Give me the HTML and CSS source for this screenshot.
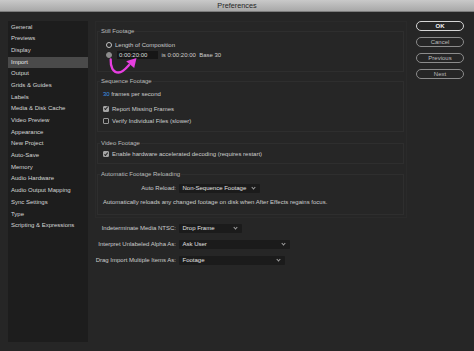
FILE: index.html
```html
<!DOCTYPE html>
<html lang="en">
<head>
    <meta charset="UTF-8">
    <title>Preferences</title>
    <link rel="stylesheet" href="styles.css">
</head>
<body>
    <div class="titlebar">Preferences</div>

    <div class="window">
        <ul class="sidebar">
            <li>General</li>
            <li>Previews</li>
            <li>Display</li>
            <li class="active">Import</li>
            <li>Output</li>
            <li>Grids &amp; Guides</li>
            <li>Labels</li>
            <li>Media &amp; Disk Cache</li>
            <li>Video Preview</li>
            <li>Appearance</li>
            <li>New Project</li>
            <li>Auto-Save</li>
            <li>Memory</li>
            <li>Audio Hardware</li>
            <li>Audio Output Mapping</li>
            <li>Sync Settings</li>
            <li>Type</li>
            <li>Scripting &amp; Expressions</li>
        </ul>

        <div class="content">
            <div class="panel">
                <fieldset class="group still">
                    <legend>Still Footage</legend>
                    <div class="row radio-row first">
                        <span class="radio"></span>
                        <span>Length of Composition</span>
                    </div>
                    <div class="row radio-row last">
                        <span class="radio on"></span>
                        <span class="timecode">0:00:20:00</span>
                        <span class="note">is 0:00:20:00&nbsp;&nbsp;Base 30</span>
                    </div>
                </fieldset>

                <fieldset class="group sequence">
                    <legend>Sequence Footage</legend>
                    <div class="row fps-row"><span class="num">30</span> frames per second</div>
                    <div class="row check-row report">
                        <span class="check on"></span>
                        <span>Report Missing Frames</span>
                    </div>
                    <div class="row check-row verify">
                        <span class="check"></span>
                        <span>Verify Individual Files (slower)</span>
                    </div>
                </fieldset>

                <fieldset class="group video">
                    <legend>Video Footage</legend>
                    <div class="row check-row hw">
                        <span class="check on"></span>
                        <span>Enable hardware accelerated decoding (requires restart)</span>
                    </div>
                </fieldset>

                <fieldset class="group reload">
                    <legend>Automatic Footage Reloading</legend>
                    <div class="row field-row inset">
                        <span class="field-label">Auto Reload:</span>
                        <span class="dropdown w-reload">Non-Sequence Footage</span>
                    </div>
                    <div class="row hint">Automatically reloads any changed footage on disk when After Effects regains focus.</div>
                </fieldset>
            </div>

            <div class="row field-row ntsc">
                <span class="field-label">Indeterminate Media NTSC:</span>
                <span class="dropdown w-ntsc">Drop Frame</span>
            </div>
            <div class="row field-row alpha">
                <span class="field-label">Interpret Unlabeled Alpha As:</span>
                <span class="dropdown w-alpha">Ask User</span>
            </div>
            <div class="row field-row drag">
                <span class="field-label">Drag Import Multiple Items As:</span>
                <span class="dropdown w-drag">Footage</span>
            </div>

            <svg class="annotation" width="60" height="60" viewBox="0 0 60 60">
                <path d="M15.7 38.5 C15.3 46 18 51.5 23.5 51.5 C27.5 51.5 30.5 48 34 44" fill="none" stroke="#e63fe0" stroke-width="2.3" stroke-linecap="round"/>
                <polygon points="41.5,37 39.2,47 31.2,40.2" fill="#e63fe0"/>
            </svg>
        </div>

        <div class="actions">
            <button class="primary">OK</button>
            <button>Cancel</button>
            <button>Previous</button>
            <button>Next</button>
        </div>
    </div>
</body>
</html>
```

FILE: styles.css
```css
body {
    margin: 0;
    background-color: #262626;
    font-family: "Liberation Sans", Arial, sans-serif;
    font-size: 6px;
    color: #cdcdcd;
    height: 351px;
    overflow: hidden;
}

/* window title */
.titlebar {
    height: 11px;
    line-height: 12px;
    text-align: center;
    font-size: 7.3px;
    color: #262626;
    background: linear-gradient(#c9c9c9, #a8a8a8);
    border-bottom: 1px solid #7c7c7c;
}

.window {
    display: flex;
    align-items: flex-start;
    padding: 9px 0 0 8px;
}

/* category list */
.sidebar {
    list-style: none;
    margin: 0;
    padding: 0.5px 0 0;
    width: 80px;
    height: 320.5px;
    background-color: #1d1d1d;
    color: #d6d6d6;
}
.sidebar li {
    height: 11.7px;
    line-height: 11.7px;
    padding-left: 3px;
    white-space: nowrap;
}
.sidebar li.active {
    background-color: #4a4a4a;
    color: #e6e6e6;
}

.content {
    position: relative;
    width: 312px;
    margin-left: 7px;
}

.panel {
    border: 1px solid #2a2a2a;
    padding: 0 2px 2px 1px;
}

.group {
    margin: 0;
    padding: 0 3px 0 2px;
    border: 1px solid #2e2e2e;
    min-width: 0;
}
.group legend {
    padding: 0 1px;
    height: 8px;
    line-height: 8px;
    color: #bdbdbd;
}
.group.still { margin-top: 5px; }
.group.sequence { margin-top: 5px; }
.group.video { margin-top: 7px; }
.group.reload { margin-top: 6px; }

.row {
    display: flex;
    align-items: center;
    height: 10px;
    white-space: nowrap;
}

/* still footage */
.radio-row { padding-left: 6px; }
.radio-row.first { margin-top: 5px; }
.radio-row.last { margin-bottom: 11px; }
.radio {
    box-sizing: border-box;
    width: 6px;
    height: 6px;
    border-radius: 50%;
    border: 1px solid #c4c4c4;
    margin-right: 3px;
}
.radio.on {
    border-color: #8d8d8d;
    background-color: #8d8d8d;
    margin-right: 5px;
}
.timecode {
    box-sizing: border-box;
    width: 41px;
    height: 8px;
    line-height: 8px;
    padding-left: 2px;
    background-color: #161616;
    color: #dcdcdc;
}
.note { margin-left: 3.5px; }

/* sequence footage */
.fps-row {
    height: 11px;
    margin-top: 3px;
    padding-left: 3px;
}
.num {
    color: #3d93e6;
    margin-right: 1.5px;
}
.check-row {
    height: 11px;
    padding-left: 3px;
}
.check-row.report { margin-top: 4px; }
.check-row.verify { margin-top: 1px; margin-bottom: 5px; }
.check-row.hw { height: 12px; margin-top: 1px; margin-bottom: 3px; }
.check {
    position: relative;
    box-sizing: border-box;
    width: 6px;
    height: 6px;
    border: 1px solid #9a9a9a;
    border-radius: 1px;
    margin-right: 3px;
}
.check.on {
    background-color: #a3a3a3;
    border-color: #a3a3a3;
}
.check.on::after {
    content: "";
    position: absolute;
    left: 1.2px;
    top: -0.2px;
    width: 1.4px;
    height: 3px;
    border: solid #262626;
    border-width: 0 1px 1px 0;
    transform: rotate(40deg);
}

/* label + popup rows */
.field-row { height: 10px; }
.field-label {
    width: 81px;
    text-align: right;
    margin-right: 3px;
}
.inset { margin-top: 5px; }
.inset .field-label { width: 76px; }
.dropdown {
    position: relative;
    box-sizing: border-box;
    height: 9px;
    line-height: 9px;
    padding-left: 3.5px;
    background-color: #1b1b1b;
    border-radius: 1px;
    color: #e2e2e2;
}
.dropdown::after {
    content: "";
    position: absolute;
    right: 5px;
    top: 2.5px;
    width: 2px;
    height: 2px;
    border: solid #a0a0a0;
    border-width: 0 1px 1px 0;
    transform: rotate(45deg);
}
.w-reload { width: 81px; }
.w-ntsc { width: 63px; }
.w-alpha { width: 111px; }
.w-drag { width: 106px; }

.hint {
    margin-top: 4px;
    margin-bottom: 7px;
    padding-left: 3px;
}

.ntsc { margin-top: 5px; }
.alpha { margin-top: 6px; }
.drag { margin-top: 6px; }

/* pink pointer drawn over the still footage group */
.annotation {
    position: absolute;
    left: 0;
    top: 0;
    overflow: visible;
}

/* dialog buttons */
.actions {
    display: flex;
    flex-direction: column;
    gap: 6px;
    width: 48px;
    margin-left: 9px;
}
button {
    box-sizing: border-box;
    height: 10px;
    padding: 0;
    font-family: "Liberation Sans", Arial, sans-serif;
    font-size: 6px;
    line-height: 8px;
    color: #bdbdbd;
    background-color: #262626;
    border: 1px solid #8c8c8c;
    border-radius: 5px;
}
button.primary {
    color: #f2f2f2;
    font-weight: bold;
    border-color: #d6d6d6;
}
```
